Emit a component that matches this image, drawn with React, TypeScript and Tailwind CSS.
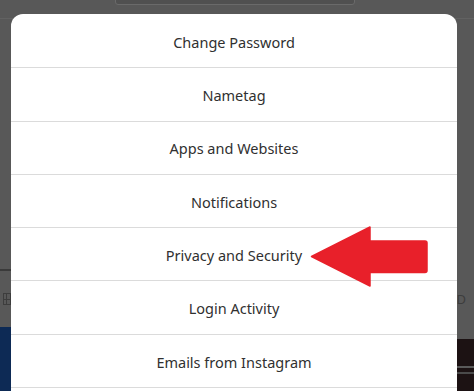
import React from "react";

const items = [
  "Change Password",
  "Nametag",
  "Apps and Websites",
  "Notifications",
  "Privacy and Security",
  "Login Activity",
  "Emails from Instagram",
];

export default function App() {
  return (
    <div
      className="relative w-[474px] h-[391px] overflow-hidden bg-[#585858]"
      style={{ fontFamily: '"Noto Sans", "Open Sans", sans-serif' }}
    >
      {/* background page behind the overlay */}
      <div className="absolute inset-0">
        <div className="absolute left-[115px] top-[-4px] w-[240px] h-[9px] rounded-[3px] border border-[#6a6a6a] bg-[#505050]" />
        <div className="absolute left-0 top-[18px] w-full h-px bg-[#626262]" />
        <div className="absolute left-0 top-[269px] w-[11px] h-[2px] bg-[#3a3a3a]" />
        <div className="absolute left-[3px] top-[293px] w-[8px] h-[12px] grid grid-cols-2 border border-[#3d3d3d]">
          <div className="border-r border-b border-[#3d3d3d]" />
          <div className="border-b border-[#3d3d3d]" />
          <div className="border-r border-[#3d3d3d]" />
          <div />
        </div>
        <div className="absolute left-0 top-[327px] w-[12px] h-[64px] bg-[#0d2a55]" />
        <div className="absolute right-[8px] top-[293px] text-[13px] leading-none text-[#3d3d3d]">D</div>
        <div className="absolute right-0 top-[339px] w-[18px] h-[52px] bg-[#1c1213] flex flex-col gap-[4px] pt-[27px]">
          <div className="h-[2px] bg-[#5a5a5a]" />
          <div className="h-[2px] bg-[#4a4a4a]" />
        </div>
      </div>

      {/* overlay layout */}
      <div className="relative flex pl-[11px] pt-[14px]">
        <div className="w-[446px] h-[400px] bg-white rounded-[12px] overflow-hidden flex flex-col pt-px">
          {items.map((t) => (
            <div
              key={t}
              className="h-[53.3px] shrink-0 flex items-center justify-center pt-[3px] border-b border-[#dbdbdb] text-[14.5px] text-[#303030] box-border"
            >
              {t}
            </div>
          ))}
        </div>
      </div>

      {/* red arrow */}
      <svg
        className="absolute left-0 top-0"
        width="474"
        height="391"
        viewBox="0 0 474 391"
      >
        <path
          d="M311.5 256.5 L370 227 L370 241 L425 241 Q427 241 427 243 L427 270.5 Q427 272.5 425 272.5 L370 272.5 L370 286 Z"
          fill="#e8202a"
          stroke="#e8202a"
          strokeWidth="1.5"
          strokeLinejoin="round"
        />
      </svg>
    </div>
  );
}
